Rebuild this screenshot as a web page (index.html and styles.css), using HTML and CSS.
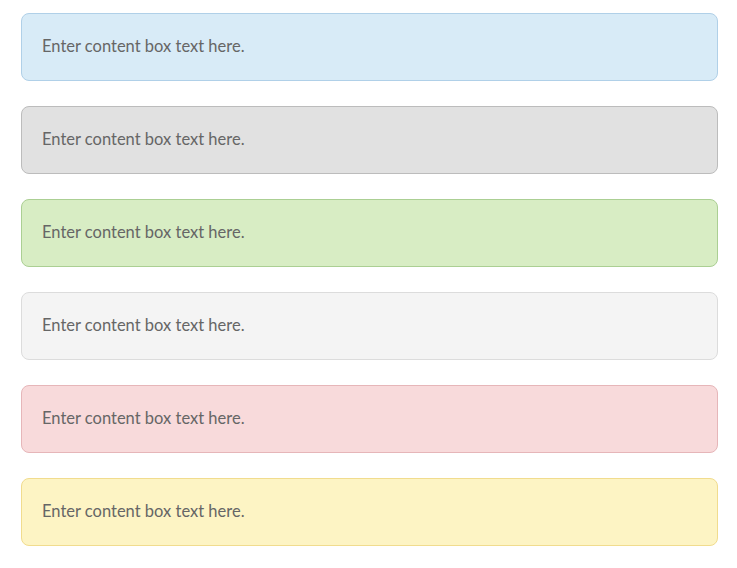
FILE: index.html
```html
<!DOCTYPE html>
<html>
<head>
<meta charset="utf-8">
<link rel="stylesheet" href="styles.css">
</head>
<body>
<div class="stack">
  <div class="box box-blue">Enter content box text here.</div>
  <div class="box box-gray">Enter content box text here.</div>
  <div class="box box-green">Enter content box text here.</div>
  <div class="box box-light">Enter content box text here.</div>
  <div class="box box-red">Enter content box text here.</div>
  <div class="box box-yellow">Enter content box text here.</div>
</div>
</body>
</html>
```
FILE: styles.css
```css
html, body {
  margin: 0;
  padding: 0;
  background: #ffffff;
}
.stack {
  display: flex;
  flex-direction: column;
  gap: 25px;
  padding: 13px 19px 0 21px;
}
.box {
  border: 1px solid;
  border-radius: 8px;
  padding: 20px 20px 22px;
  line-height: 24px;
  font-family: Lato, "Open Sans", sans-serif;
  font-size: 16.5px;
  color: #666666;
}
.box-blue { background: #d8ebf7; border-color: #b0d0e8; }
.box-gray { background: #e1e1e1; border-color: #bcbcbc; }
.box-green { background: #d8edc4; border-color: #abcf93; }
.box-light { background: #f4f4f4; border-color: #dcdcdc; }
.box-red { background: #f8dadb; border-color: #e6b6b9; }
.box-yellow { background: #fdf4c4; border-color: #f1dc8e; }
```
